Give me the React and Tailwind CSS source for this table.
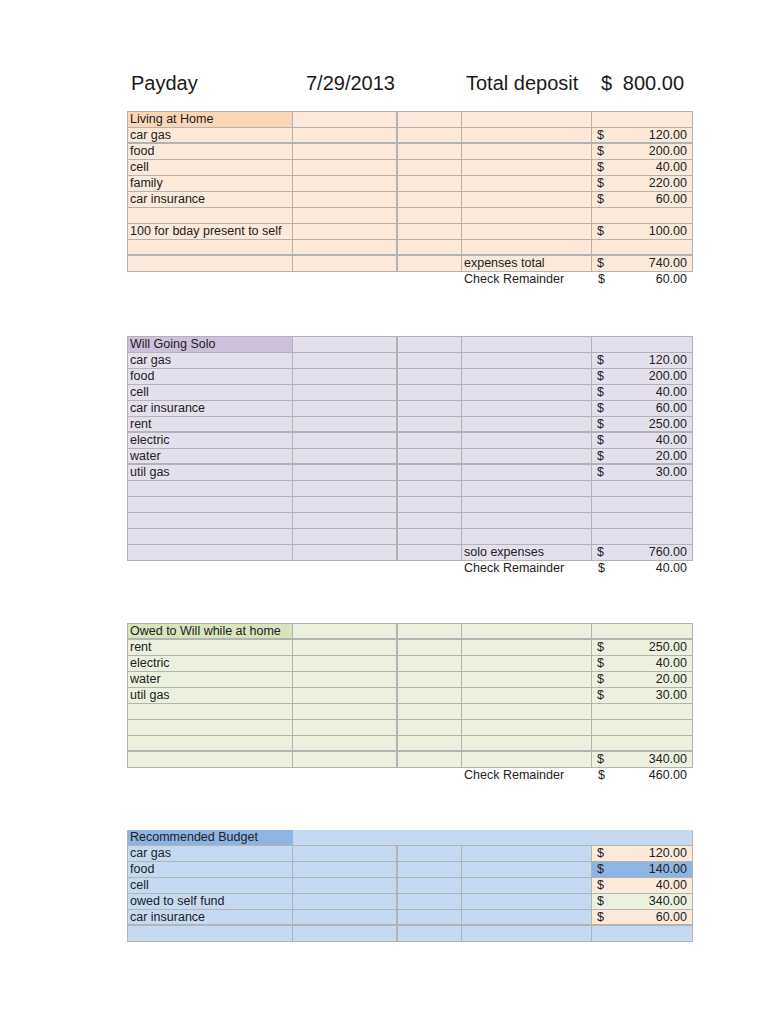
import React from 'react'

const COLS = 'grid grid-cols-[165px_105px_64px_130px_100px]'

const THEMES = {
  peach: { row: 'bg-[#fde9d9]', head: 'bg-[#fcd5b4]' },
  lilac: { row: 'bg-[#e4dfec]', head: 'bg-[#ccc0da]' },
  green: { row: 'bg-[#ebf1de]', head: 'bg-[#d8e4bc]' },
  blue: { row: 'bg-[#c5d9f1]', head: 'bg-[#8db4e2]' },
}

const AMT_BG = {
  peach: 'bg-[#fde9d9]',
  blue: 'bg-[#8db4e2]',
  green: 'bg-[#ebf1de]',
}

// each table: title + rows; thick = double rule under the row
const SECTIONS = [
  {
    theme: 'peach',
    title: 'Living at Home',
    titleThick: false,
    rows: [
      { label: 'car gas', amt: '120.00', thick: true },
      { label: 'food', amt: '200.00' },
      { label: 'cell', amt: '40.00' },
      { label: 'family', amt: '220.00' },
      { label: 'car insurance', amt: '60.00' },
      {},
      { label: '100 for bday present to self', amt: '100.00' },
      { thick: true },
      { note: 'expenses total', amt: '740.00' },
    ],
    check: '60.00',
    gap: 'mt-[48px]',
  },
  {
    theme: 'lilac',
    title: 'Will Going Solo',
    rows: [
      { label: 'car gas', amt: '120.00' },
      { label: 'food', amt: '200.00' },
      { label: 'cell', amt: '40.00' },
      { label: 'car insurance', amt: '60.00' },
      { label: 'rent', amt: '250.00', thick: true },
      { label: 'electric', amt: '40.00' },
      { label: 'water', amt: '20.00', thick: true },
      { label: 'util gas', amt: '30.00' },
      {},
      {},
      {},
      {},
      { note: 'solo expenses', amt: '760.00' },
    ],
    check: '40.00',
    gap: 'mt-[46px]',
  },
  {
    theme: 'green',
    title: 'Owed to Will while at home',
    titleThick: true,
    rows: [
      { label: 'rent', amt: '250.00' },
      { label: 'electric', amt: '40.00' },
      { label: 'water', amt: '20.00' },
      { label: 'util gas', amt: '30.00' },
      {},
      {},
      { thick: true },
      { amt: '340.00' },
    ],
    check: '460.00',
    gap: 'mt-[46px]',
  },
]

const BUDGET = [
  { label: 'car gas', amt: '120.00', amtBg: 'peach' },
  { label: 'food', amt: '140.00', amtBg: 'blue' },
  { label: 'cell', amt: '40.00', amtBg: 'peach' },
  { label: 'owed to self fund', amt: '340.00', amtBg: 'green' },
  { label: 'car insurance', amt: '60.00', amtBg: 'peach', thick: true },
  {},
]

function Amount({ value }) {
  if (!value) return null
  return (
    <>
      <span>$</span>
      <span>{value}</span>
    </>
  )
}

function Row({ r, theme, head }) {
  const b = r.thick ? 'border-b-2' : 'border-b'
  return (
    <div className={`${COLS} h-4 ${THEMES[theme].row}`}>
      <div className={`border-r ${b} border-[#b3b3b3] px-[2px] whitespace-nowrap overflow-hidden ${head ? THEMES[theme].head : ''}`}>{r.label}</div>
      <div className={`border-r-2 ${b} border-[#b3b3b3]`} />
      <div className={`border-r ${b} border-[#b3b3b3]`} />
      <div className={`border-r ${b} border-[#b3b3b3] px-[2px]`}>{r.note}</div>
      <div className={`${b} border-[#b3b3b3] flex justify-between pl-[5px] pr-[5px] ${r.amtBg ? AMT_BG[r.amtBg] : ''}`}>
        <Amount value={r.amt} />
      </div>
    </div>
  )
}

function CheckRow({ value }) {
  return (
    <div className={`${COLS} h-4 pl-px`}>
      <div />
      <div />
      <div />
      <div className="px-[2px] whitespace-nowrap">Check Remainder</div>
      <div className="flex justify-between pl-[6px] pr-[5px]">
        <Amount value={value} />
      </div>
    </div>
  )
}

export default function App() {
  return (
    <div className="min-h-[1024px] bg-white text-[#222] font-['Liberation_Sans',Arial,sans-serif] text-[12.5px] leading-[14px]">
      <div className="pl-[131px] pt-[70px] flex items-center h-[26px] box-content text-[20px] leading-[26px] text-[#1a1a1a]">
        <span className="w-[175px]">Payday</span>
        <span className="w-[160px]">7/29/2013</span>
        <span className="w-[135px]">Total deposit</span>
        <span className="flex justify-between w-[83px]">
          <span>$</span>
          <span>800.00</span>
        </span>
      </div>

      <div className="ml-[127px] mt-[15px] w-[566px]">
        {SECTIONS.map((s, i) => (
          <div key={i}>
            <div className="border-t border-x border-[#b3b3b3]">
              <Row r={{ label: s.title, thick: s.titleThick }} theme={s.theme} head />
              {s.rows.map((r, j) => (
                <Row key={j} r={r} theme={s.theme} />
              ))}
            </div>
            <CheckRow value={s.check} />
            <div className={s.gap} />
          </div>
        ))}

        <div className="border-x border-[#b3b3b3]">
          <div className="flex h-4 bg-[#c5d9f1] border-b border-[#b3b3b3]">
            <div className="w-[165px] bg-[#8db4e2] px-[2px]">Recommended Budget</div>
          </div>
          {BUDGET.map((r, j) => (
            <Row key={j} r={r} theme="blue" />
          ))}
        </div>
      </div>
    </div>
  )
}
